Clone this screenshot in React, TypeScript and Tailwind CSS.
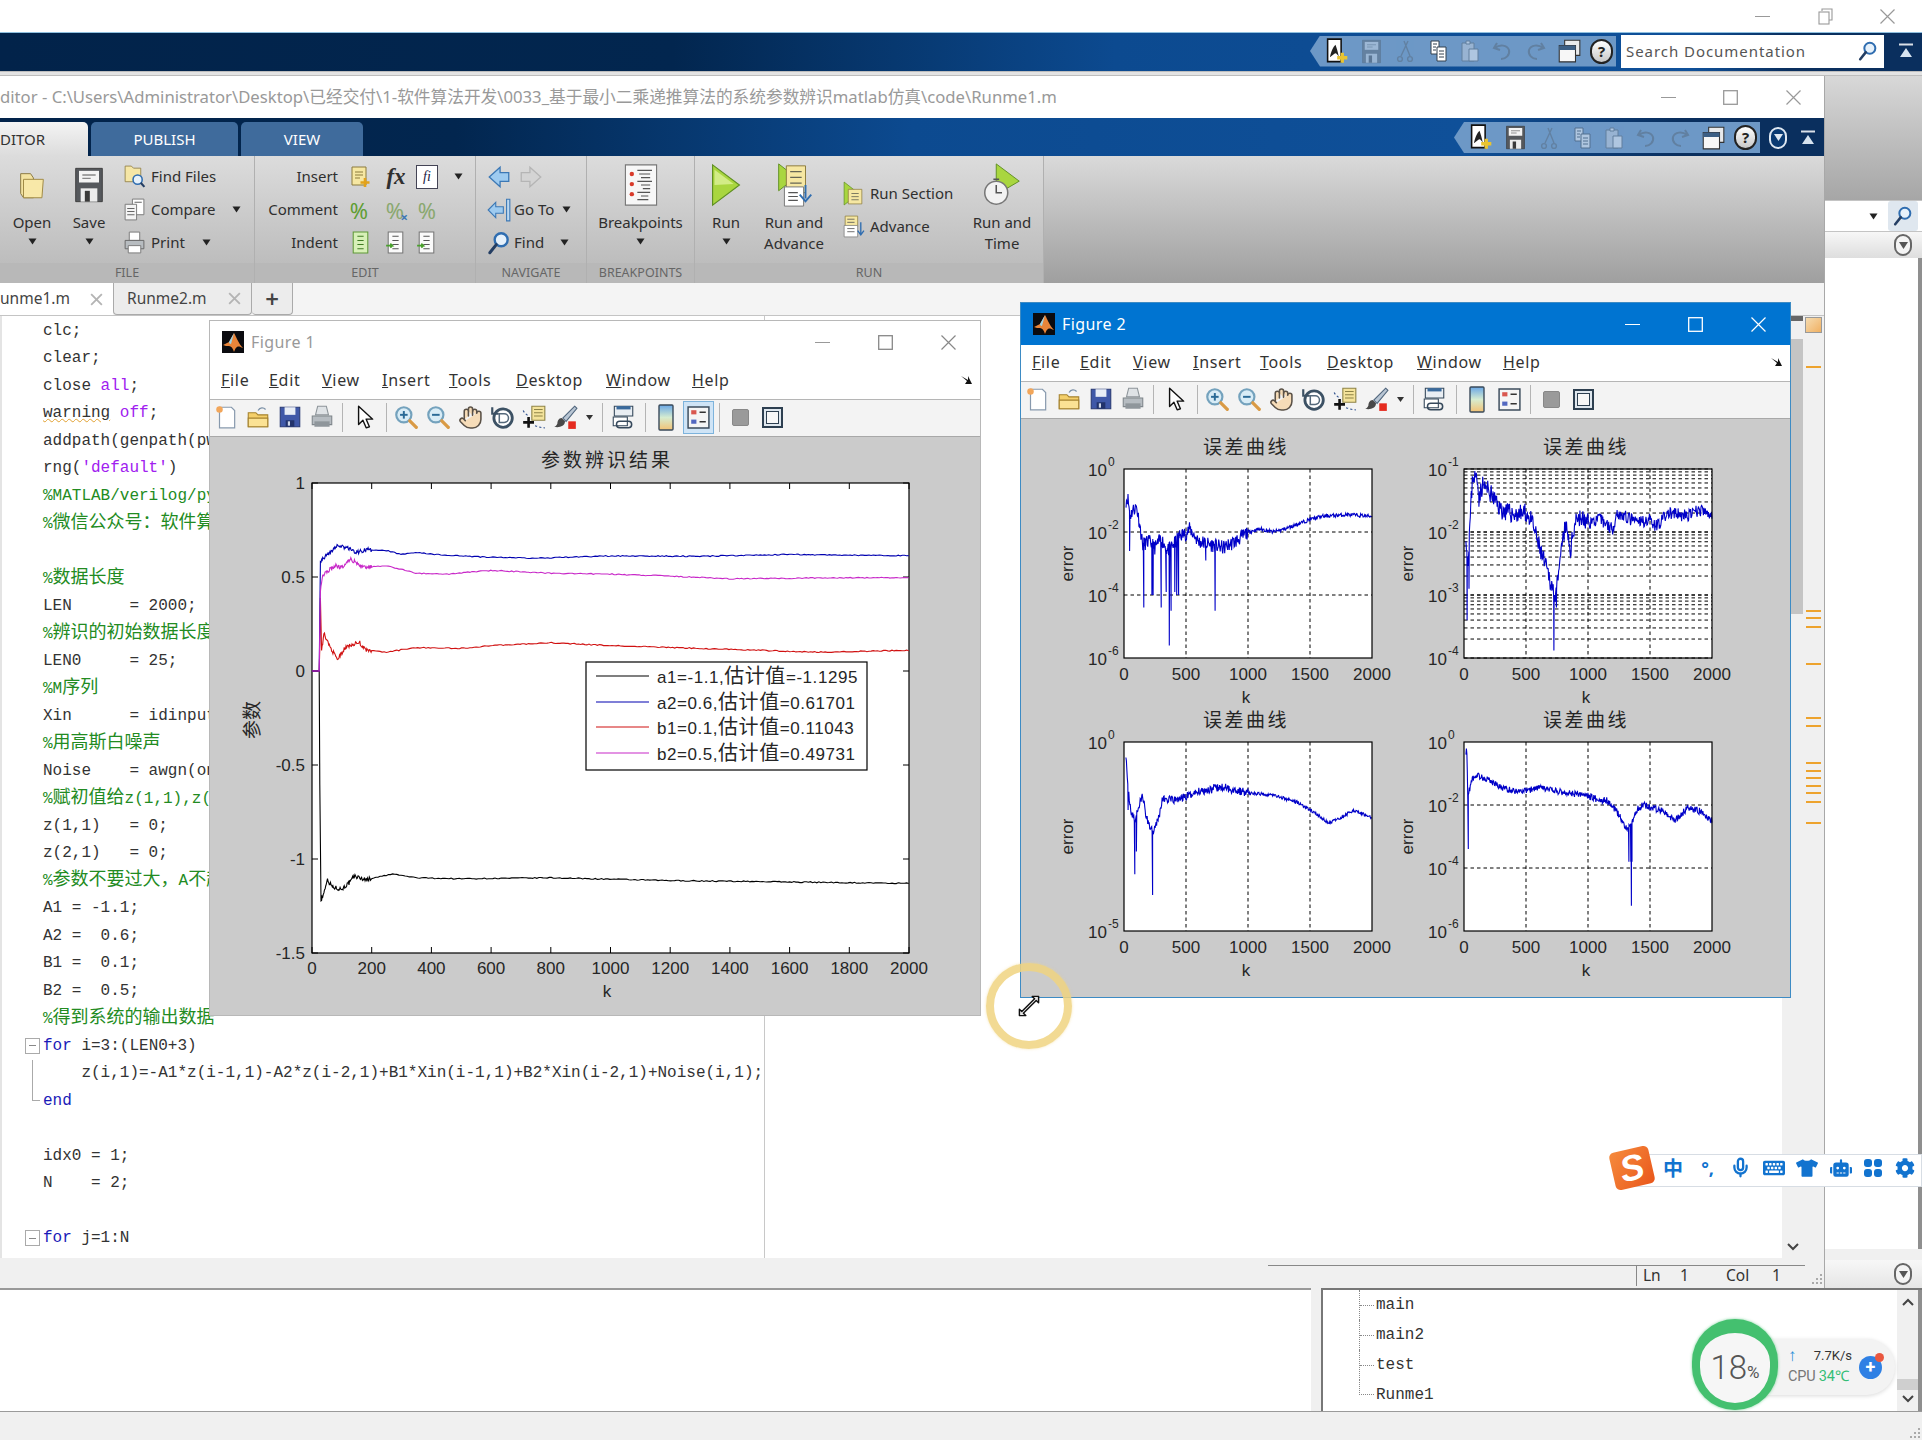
// App.tsx - MATLAB desktop with two figure windows
import type { ReactNode } from 'react';
import { Hand, Mic } from 'lucide-react';
import { FaCog, FaKeyboard, FaRobot, FaTshirt } from 'react-icons/fa';

const CJK = "'Noto Sans CJK SC', sans-serif";
const ARIAL = "'Liberation Sans', 'Noto Sans CJK SC', sans-serif";

const Svg = ({ s = 24, children }: { s?: number; children: ReactNode }) => (
  <svg width={s} height={s} viewBox="0 0 24 24" className="shrink-0">
    {children}
  </svg>
);

/* ---------- small drawn icons ---------- */
const Caret = () => (
  <svg width="9" height="7" viewBox="0 0 9 7" className="shrink-0">
    <path d="M0.5 0.5h8L4.5 6.5z" fill="#222" />
  </svg>
);
const Folder = ({ s = 34 }: { s?: number }) => (
  <Svg s={s}>
    <path d="M4 4h7l2 3v14H6L4 18z" fill="#f3e3a2" stroke="#8c7a45" strokeWidth="0.7" />
    <path d="M6 8h14l-1 13H6z" fill="#f8e8a8" stroke="#a08a45" strokeWidth="0.7" />
  </Svg>
);
const Floppy = ({ s = 40, dim = false }: { s?: number; dim?: boolean }) => (
  <Svg s={s}>
    <g opacity={dim ? 0.35 : 1}>
      <path d="M4 2h16v20H4z" fill="#55585c" stroke="#333" strokeWidth="0.5" />
      <path d="M6 3.5h12v7H6z" fill="#f3f3f3" />
      <path d="M8 6h8M8 8h5" stroke="#888" strokeWidth="0.8" />
      <path d="M7 14h10v8H7z" fill="#ececec" />
      <path d="M9.5 15.5h3v6.5h-3z" fill="#3a3a3a" />
    </g>
  </Svg>
);
const Magnifier = ({ s = 22, color = '#2f6db0' }: { s?: number; color?: string }) => (
  <Svg s={s}>
    <circle cx="14" cy="9" r="6" fill="#e6f1fb" stroke={color} strokeWidth="2.2" />
    <path d="M9.5 13.5 3.5 21" stroke="#243e63" strokeWidth="2.8" strokeLinecap="round" />
  </Svg>
);
const FindFilesIcon = () => (
  <Svg s={25}>
    <path d="M3 2h6l2 2h7v13H3z" fill="#f5e6a6" stroke="#8f7d45" strokeWidth="0.8" />
    <circle cx="15" cy="15" r="4.4" fill="#e6f1fb" stroke="#2f6db0" strokeWidth="1.5" />
    <path d="m18 18 3.5 4" stroke="#243e63" strokeWidth="2" />
  </Svg>
);
const CompareIcon = () => (
  <Svg s={25}>
    <path d="M10 2h11v15H10z" fill="#fff" stroke="#777" strokeWidth="0.9" />
    <path d="M3 7h11v15H3z" fill="#f4f4f4" stroke="#777" strokeWidth="0.9" />
    <path d="M5 11h7M5 14h7M5 17h7M12 5h7" stroke="#666" strokeWidth="1" />
  </Svg>
);
const PrintIcon = () => (
  <Svg s={25}>
    <path d="M7 2h10v8H7z" fill="#fff" stroke="#777" strokeWidth="0.9" />
    <path d="M3 10h18v8H3z" fill="#b7bcc0" stroke="#666" strokeWidth="0.9" />
    <path d="M6 15h12v7H6z" fill="#fff" stroke="#777" strokeWidth="0.9" />
  </Svg>
);
const InsertIcon = () => (
  <Svg s={24}>
    <path d="M4 2h14v18H4z" fill="#f6e7a2" stroke="#8b7a3c" strokeWidth="1" />
    <path d="M7 7h8M7 10h8M7 13h5" stroke="#8b7a3c" strokeWidth="1" />
    <path d="M17 13v9M12.500 17.500h9" stroke="#e2a21b" strokeWidth="2.6" />
  </Svg>
);
const BoxFn = () => (
  <span className="flex h-[24px] w-[22px] items-center justify-center border border-[#445] bg-white font-['Liberation_Serif'] text-[14px] italic text-[#224]">
    fi
  </span>
);
const Pct = ({ tone, extra }: { tone: string; extra?: string }) => (
  <span className={`relative flex h-[24px] w-[22px] items-center justify-center text-[22px] leading-none ${tone}`}>
    %
    {extra && <span className={`absolute -bottom-[2px] -right-[2px] text-[13px] font-bold leading-none ${extra}`}>×</span>}
  </span>
);
const GreenDoc = ({ arrow }: { arrow?: boolean }) => (
  <Svg s={25}>
    <path d="M5 2h14v20H5z" fill={arrow ? '#fafafa' : '#d8f0b8'} stroke={arrow ? '#777' : '#5f9a36'} strokeWidth="1" />
    <path d="M9 6h6M9 10h6M9 14h6M9 18h6" stroke={arrow ? '#555' : '#3e7a22'} strokeWidth="1" />
    {arrow && <path d="M3 15h6l-2-2m2 2-2 2" stroke="#49a02c" strokeWidth="1.6" fill="none" />}
  </Svg>
);
const NavArrow = ({ dir, dim }: { dir: 'l' | 'r'; dim?: boolean }) => (
  <Svg s={26}>
    <path
      d={dir === 'l' ? 'M3 12 13 3v5h8v8h-8v5z' : 'M21 12 11 3v5H3v8h8v5z'}
      fill={dim ? '#d4d4d4' : '#9ecbf0'}
      stroke={dim ? '#b5b5b5' : '#3c78b5'}
      strokeWidth="1.2"
    />
  </Svg>
);
const GoToIcon = () => (
  <Svg s={26}>
    <path d="M2 12 9 5v4h7v6H9v4z" fill="#9ecbf0" stroke="#3c78b5" />
    <path d="M19 2h3v20h-3z" fill="#bcd8f0" stroke="#3c78b5" />
  </Svg>
);
const BreakpointsIcon = () => (
  <Svg s={44}>
    <path d="M3.500 1h17v22h-17z" fill="#f7f7f7" stroke="#777" strokeWidth="0.6" />
    <circle cx="7" cy="6" r="1.2" fill="#d83a2a" />
    <circle cx="7" cy="11.500" r="1.2" fill="#d83a2a" />
    <circle cx="7" cy="17" r="1.2" fill="#d83a2a" />
    <path d="M10 4h8M11 6h6M12 8h5M10 10h8M12 12h5M13 14h4M10 16h7M12 18h4M10 20h6" stroke="#555" strokeWidth="0.6" />
  </Svg>
);
const RunIcon = () => (
  <Svg s={46}>
    <path d="M5 1.500 19 12 5 22.500z" fill="#a9d63f" stroke="#5f8f22" strokeWidth="0.6" />
    <path d="M6 4v8l10-.5z" fill="#d2ec86" />
  </Svg>
);
const RunAdvanceIcon = () => (
  <Svg s={46}>
    <path d="M4 1 13 8 4 15z" fill="#a9d63f" stroke="#5f8f22" strokeWidth="0.5" />
    <path d="M8 2h10v14H8z" fill="#f6e7a2" stroke="#8b7a3c" strokeWidth="0.5" />
    <path d="M10 5h6M10 8h6M10 11h6" stroke="#665" strokeWidth="0.6" />
    <path d="M7 13h10v10H7z" fill="#fff" stroke="#777" strokeWidth="0.5" />
    <path d="M9 16h5M9 18h5M9 20h5" stroke="#555" strokeWidth="0.6" />
    <path d="M18 12v7m-3-2 3 3.500 3-3.500" stroke="#2f6db0" strokeWidth="1" fill="none" />
  </Svg>
);
const RunSectionIcon = () => (
  <Svg s={25}>
    <path d="M3 1 17 12 3 23z" fill="#a9d63f" stroke="#5f8f22" strokeWidth="0.7" />
    <path d="M7 8h13v14H7z" fill="#f6e7a2" stroke="#8b7a3c" strokeWidth="0.7" />
    <path d="M10 12h7M10 15h7M10 18h7" stroke="#665" strokeWidth="0.8" />
  </Svg>
);
const AdvanceIcon = () => (
  <Svg s={25}>
    <path d="M4 2h12v10H4z" fill="#f6e7a2" stroke="#8b7a3c" strokeWidth="0.7" />
    <path d="M3 11h13v11H3z" fill="#fff" stroke="#777" strokeWidth="0.7" />
    <path d="M6 5h7M6 8h7M6 14h7M6 17h7" stroke="#555" strokeWidth="0.8" />
    <path d="M19 8v11m-3-3 3 4 3-4" stroke="#2f6db0" strokeWidth="1.3" fill="none" />
  </Svg>
);
const RunTimeIcon = () => (
  <Svg s={46}>
    <path d="M9 1 21 10 9 17z" fill="#a9d63f" stroke="#5f8f22" strokeWidth="0.5" />
    <circle cx="9" cy="16" r="6" fill="#f2f2f2" stroke="#777" strokeWidth="0.8" />
    <path d="M9 12v4h3M7.500 9h3" stroke="#555" strokeWidth="0.8" fill="none" />
  </Svg>
);

/* quick access icons */
const QaNew = () => (
  <Svg s={27}>
    <path d="M5 1h12v20H5z" fill="#fff" stroke="#111" strokeWidth="1.4" />
    <path d="M7 17c2-8 4-10 5-11 1 3 2 6 3 11-2-4-3-4-4-3z" fill="#222" />
    <path d="M18 13v9M13.500 17.500h9" stroke="#e9c430" strokeWidth="3" />
  </Svg>
);
const QaCut = () => (
  <Svg s={24}>
    <g opacity="0.4" stroke="#52606d" fill="none" strokeWidth="1.4">
      <path d="M15 2 8 17M11 2l6 15" />
      <circle cx="7" cy="20" r="2.4" />
      <circle cx="17" cy="20" r="2.4" />
    </g>
  </Svg>
);
const QaCopy = ({ dim }: { dim?: boolean }) => (
  <Svg s={24}>
    <g opacity={dim ? 0.45 : 1}>
      <path d="M5 2h8v13H5z" fill="#fff" stroke="#33414f" />
      <path d="M11 8h9v14h-9z" fill="#fff" stroke="#33414f" />
      <path d="M7 5h4M7 8h3M7 11h3M13 12h5M13 15h5M13 18h5" stroke="#33414f" />
    </g>
  </Svg>
);
const QaPaste = () => (
  <Svg s={24}>
    <g opacity="0.45">
      <path d="M4 4h12v18H4z" fill="#cdd6df" stroke="#52606d" />
      <path d="M8 2h4v3H8z" fill="#fff" stroke="#52606d" />
      <path d="M11 10h9v12h-9z" fill="#fff" stroke="#52606d" />
    </g>
  </Svg>
);
const QaUndo = ({ flip }: { flip?: boolean }) => (
  <Svg s={24}>
    <g opacity="0.42" transform={flip ? 'matrix(-1 0 0 1 24 0)' : undefined}>
      <path d="M6 4 3 9l6 2M4 9c5-4 12-3 14 2 1 5-3 9-8 9" fill="none" stroke="#52606d" strokeWidth="2" />
    </g>
  </Svg>
);
const QaWindows = () => (
  <Svg s={26}>
    <path d="M8 2h14v14H8z" fill="#e8eaec" stroke="#333" strokeWidth="1" />
    <path d="M3 7h15v15H3z" fill="#f7f7f7" stroke="#333" strokeWidth="1" />
    <path d="M3 7h15v4H3z" fill="#3c5f85" />
  </Svg>
);
const QaHelp = () => (
  <span className="flex h-[25px] w-[23px] items-center justify-center rounded-full border-2 border-[#222] bg-gradient-to-b from-white to-[#c8c8c8] text-[15px] font-bold leading-none text-[#222]">
    ?
  </span>
);
const Collapse = () => (
  <svg width="16" height="16" viewBox="0 0 16 16">
    <path d="M1 1.500h14" stroke="#fff" strokeWidth="2" opacity="0.85" />
    <path d="M8 5 14 14H2z" fill="#d7e3ef" />
  </svg>
);
const CircleDown = ({ light }: { light?: boolean }) => (
  <span
    className={`flex h-[22px] w-[18px] items-center justify-center rounded-full border-2 ${
      light ? 'border-[#dfe8f2] bg-[#0a3a72]' : 'border-[#666] bg-[#f4f4f4]'
    }`}
  >
    <svg width="9" height="7" viewBox="0 0 9 7">
      <path d="M0 0h9L4.500 7z" fill={light ? '#dfe8f2' : '#555'} />
    </svg>
  </span>
);
const WinX = ({ color, s = 17, w = 1.2 }: { color: string; s?: number; w?: number }) => (
  <svg width={s} height={s} viewBox="0 0 17 17">
    <path d="m1.500 1.500 14 14m0-14-14 14" stroke={color} strokeWidth={w} />
  </svg>
);
const WinMax = ({ color }: { color: string }) => (
  <svg width="15" height="15" viewBox="0 0 15 15">
    <rect x="0.7" y="0.7" width="13.6" height="13.6" fill="none" stroke={color} strokeWidth="1.3" />
  </svg>
);
const WinRestore = ({ color }: { color: string }) => (
  <svg width="15" height="17" viewBox="0 0 15 17">
    <path d="M4 3V1h10v11h-3" fill="none" stroke={color} strokeWidth="1.1" />
    <rect x="1" y="4" width="10" height="12" fill="none" stroke={color} strokeWidth="1.1" />
  </svg>
);
const WinMin = ({ color }: { color: string }) => <span className={`block h-px w-[15px] ${color}`} />;

const MatlabLogo = () => (
  <svg width="22" height="22" viewBox="0 0 22 22" className="shrink-0">
    <rect width="22" height="22" fill="#0b0b0f" />
    <path d="M1 14 7 11l5-9c2 3 4 10 9 15-3-1-4-2-6-1-2 1-2 3-3 5-1-4-3-6-5-6-2 0-4 0-6-1z" fill="#e9853a" />
    <path d="M7 11 12 2c-1 4-2 7-3 11-1 0-2-1-2-2z" fill="#9fd4e6" />
  </svg>
);

/* figure toolbar icons */
const TbNew = () => (
  <Svg s={26}>
    <path d="M6 3h11l3 3v16H6z" fill="#fff" stroke="#8799ad" strokeWidth="1.1" />
    <circle cx="6" cy="5" r="3" fill="#f2a65a" />
  </Svg>
);
const TbOpen = () => (
  <Svg s={26}>
    <path d="M3 8h7l2 2h9v11H3z" fill="#f4cf6a" stroke="#a5822f" />
    <path d="M3 13h18v8H3z" fill="#fbe294" stroke="#a5822f" />
    <path d="M12 6c2-3 5-3 7-1" fill="none" stroke="#7d92a8" strokeWidth="1.2" />
  </Svg>
);
const TbSave = () => (
  <Svg s={26}>
    <path d="M3 3h18v18H3z" fill="#3f58a8" stroke="#2a3b75" />
    <path d="M7 3h10v7H7z" fill="#e8edf6" />
    <path d="M8 15h8v6H8z" fill="#22336b" />
    <path d="M10 16h2v4h-2z" fill="#cfd8ea" />
  </Svg>
);
const TbPrint = () => (
  <Svg s={26}>
    <path d="M8 2h8l2 8H6z" fill="#dfe3e6" stroke="#8d9499" />
    <path d="M3 11h18v8H3z" fill="#b6bcc1" stroke="#80878c" />
    <path d="M5 16h14v5H5z" fill="#8f969b" />
  </Svg>
);
const TbPointer = () => (
  <Svg s={26}>
    <path d="M7 2v17l4-4 3 7 3-1-3-7h6z" fill="#fff" stroke="#111" strokeWidth="1.3" strokeLinejoin="round" />
  </Svg>
);
const TbZoom = ({ plus }: { plus?: boolean }) => (
  <Svg s={26}>
    <circle cx="10" cy="10" r="7" fill="#d8ecf6" stroke="#74a2bd" strokeWidth="2" />
    <path d="M6.500 10h7" stroke="#2a6a96" strokeWidth="1.8" />
    {plus && <path d="M10 6.500v7" stroke="#2a6a96" strokeWidth="1.8" />}
    <path d="m15.500 15.500 6 6" stroke="#d99a45" strokeWidth="3" strokeLinecap="round" />
  </Svg>
);
const TbHand = () => <Hand size={25} fill="#f6dcb8" color="#5a5147" strokeWidth={1.5} />;
const TbRotate = () => (
  <Svg s={26}>
    <circle cx="13" cy="13" r="8.500" fill="#fff" stroke="#3c5164" strokeWidth="2.6" />
    <path d="M3 3v6h6" fill="none" stroke="#3c5164" strokeWidth="2" />
    <path d="M9.500 9h4.500a4 4 0 0 1 0 8H9.500z" fill="none" stroke="#55697b" strokeWidth="1.4" />
  </Svg>
);
const TbData = () => (
  <Svg s={26}>
    <path d="M10 2h12v13H10z" fill="#f4e39b" stroke="#8d8347" />
    <path d="M12 5h8M12 8h8M12 11h8" stroke="#8d8347" />
    <path d="M7 12v10M2 17h10" stroke="#111" strokeWidth="2.4" />
    <path d="M2 6c1 2 3 4 5 5M13 20c3 1 6 2 9 2" stroke="#2d4f8e" strokeDasharray="2 2" fill="none" />
  </Svg>
);
const TbBrush = () => (
  <Svg s={26}>
    <path d="M21 2 10 13l3 3L23 4z" fill="#b9c6d4" stroke="#51667d" />
    <path d="M9 13c-3 0-4 3-4 5-1 2-2 3-3 3 4 1 10 0 10-5z" fill="#494949" />
    <path d="M15 16h7v7h-7z" fill="#e52b1f" />
  </Svg>
);
const TbLink = () => (
  <Svg s={26}>
    <path d="M4 2h17v9H4z" fill="#e9eef3" stroke="#35485b" />
    <path d="M6 2v3h13V2" fill="#3a6a9c" />
    <path d="M3 12h13v8H3z" fill="#fff" stroke="#35485b" />
    <path d="M9 16h8a3 3 0 0 1 0 6H9a3 3 0 0 1 0-6z" fill="none" stroke="#35485b" strokeWidth="1.4" />
  </Svg>
);
const TbColorbar = () => (
  <svg width="16" height="27" viewBox="0 0 16 27">
    <defs>
      <linearGradient id="cb" x1="0" y1="0" x2="0" y2="1">
        <stop offset="0" stopColor="#6aa7e6" />
        <stop offset="0.5" stopColor="#d6ecd0" />
        <stop offset="1" stopColor="#f3c274" />
      </linearGradient>
    </defs>
    <rect x="1" y="1" width="14" height="25" rx="1" fill="url(#cb)" stroke="#3a4a5a" strokeWidth="1.4" />
  </svg>
);
const TbLegend = () => (
  <Svg s={25}>
    <path d="M2 2h20v20H2z" fill="#f5f5f5" stroke="#3c4c5c" strokeWidth="1.4" />
    <path d="M5 5h5v4H5z" fill="#d9574f" />
    <path d="M5 14h5v4H5z" fill="#5368c0" />
    <path d="M13 7h6M13 16h6" stroke="#333" strokeWidth="1.4" />
  </Svg>
);
const TbGray = () => <span className="block h-[17px] w-[17px] rounded-[2px] border border-[#888] bg-[#9a9a9a]" />;
const TbRect = () => (
  <span className="flex h-[21px] w-[21px] items-center justify-center border-2 border-[#2d3f50] bg-[#dfe7ee]">
    <span className="block h-[13px] w-[13px] border border-[#2d3f50] bg-[#f7f7f7]" />
  </span>
);
const TbSep = ({ className }: { className: string }) => (
  <span className={`flex h-full items-center justify-center ${className}`}>
    <span className="block h-[29px] w-px bg-[#b4b4b4]" />
  </span>
);

/* ---------- ribbon ---------- */
const Big = ({
  className,
  icon,
  lines,
  caret = true,
}: {
  className: string;
  icon: ReactNode;
  lines: string[];
  caret?: boolean;
}) => (
  <div className={`flex flex-col items-center pt-[7px] ${className}`}>
    <div className="flex h-[44px] items-center justify-center">{icon}</div>
    <div className="mt-[5px] text-center leading-[21px]">
      {lines.map((l) => (
        <div key={l}>{l}</div>
      ))}
    </div>
    {caret && (
      <div className="mt-[5px]">
        <Caret />
      </div>
    )}
  </div>
);

const Section = ({ w, label, children }: { w: string; label: string; children: ReactNode }) => (
  <div className={`flex h-full flex-col border-r border-[#b0b0b0] ${w}`}>
    <div className="flex h-[107px] bg-gradient-to-b from-[#dcdcdc] to-[#bdbdbd]">{children}</div>
    <div className="flex h-[20px] items-center justify-center bg-[#b8b8b8] text-[12.500px] text-[#666]">{label}</div>
  </div>
);

const Row3 = ({ className, children }: { className?: string; children: ReactNode }) => (
  <div className={`flex h-[33px] items-center ${className ?? ''}`}>{children}</div>
);

const Ribbon = () => (
  <div className="flex h-[127px] bg-gradient-to-b from-[#dadada] to-[#9f9f9f] text-[15px] text-[#2f2f2f]">
    <Section w="w-[255px]" label="FILE">
      <Big className="w-[64px]" icon={<Folder />} lines={['Open']} />
      <Big className="w-[50px]" icon={<Floppy />} lines={['Save']} />
      <div className="flex flex-col pt-[4px]">
        <Row3 className="gap-[4px] pl-[8px]">
          <FindFilesIcon />
          <span>Find Files</span>
        </Row3>
        <Row3 className="gap-[4px] pl-[8px]">
          <CompareIcon />
          <span>Compare</span>
          <span className="ml-[12px]">
            <Caret />
          </span>
        </Row3>
        <Row3 className="gap-[4px] pl-[8px]">
          <PrintIcon />
          <span>Print</span>
          <span className="ml-[13px]">
            <Caret />
          </span>
        </Row3>
      </div>
    </Section>
    <Section w="w-[221px]" label="EDIT">
      <div className="flex flex-col pt-[4px]">
        <Row3>
          <span className="w-[83px] text-right">Insert</span>
          <span className="ml-[10px]">
            <InsertIcon />
          </span>
          <span className="ml-[12px] w-[24px] text-center font-['Liberation_Serif'] text-[23px] font-bold italic leading-none">fx</span>
          <span className="ml-[8px]">
            <BoxFn />
          </span>
          <span className="ml-[16px]">
            <Caret />
          </span>
        </Row3>
        <Row3>
          <span className="w-[83px] text-right">Comment</span>
          <span className="ml-[10px]">
            <Pct tone="text-[#5f9e33]" />
          </span>
          <span className="ml-[14px]">
            <Pct tone="text-[#8aa870]" extra="text-[#3c78b5]" />
          </span>
          <span className="ml-[10px]">
            <Pct tone="text-[#8aa870]" />
          </span>
        </Row3>
        <Row3>
          <span className="w-[83px] text-right">Indent</span>
          <span className="ml-[10px]">
            <GreenDoc />
          </span>
          <span className="ml-[10px]">
            <GreenDoc arrow />
          </span>
          <span className="ml-[6px]">
            <GreenDoc arrow />
          </span>
        </Row3>
      </div>
    </Section>
    <Section w="w-[111px]" label="NAVIGATE">
      <div className="flex flex-col pl-[10px] pt-[4px]">
        <Row3 className="gap-[6px]">
          <NavArrow dir="l" />
          <NavArrow dir="r" dim />
        </Row3>
        <Row3 className="gap-[2px]">
          <GoToIcon />
          <span>Go To</span>
          <span className="ml-[6px]">
            <Caret />
          </span>
        </Row3>
        <Row3 className="gap-[2px]">
          <Magnifier s={26} />
          <span>Find</span>
          <span className="ml-[14px]">
            <Caret />
          </span>
        </Row3>
      </div>
    </Section>
    <Section w="w-[108px]" label="BREAKPOINTS">
      <Big className="w-full" icon={<BreakpointsIcon />} lines={['Breakpoints']} />
    </Section>
    <Section w="w-[349px]" label="RUN">
      <Big className="w-[62px]" icon={<RunIcon />} lines={['Run']} />
      <Big className="w-[74px]" icon={<RunAdvanceIcon />} lines={['Run and', 'Advance']} caret={false} />
      <div className="flex w-[134px] flex-col pl-[10px] pt-[21px]">
        <Row3 className="gap-[4px]">
          <RunSectionIcon />
          <span>Run Section</span>
        </Row3>
        <Row3 className="gap-[4px]">
          <AdvanceIcon />
          <span>Advance</span>
        </Row3>
      </div>
      <Big className="w-[74px]" icon={<RunTimeIcon />} lines={['Run and', 'Time']} caret={false} />
    </Section>
  </div>
);

const QaBar = ({ live, save }: { live: boolean; save: boolean }) => (
  <div className="flex h-[31px] items-center bg-[#6d98c6] pl-[8px] [clip-path:polygon(10px_0,100%_0,100%_100%,10px_100%,0_50%)]">
    <div className="flex w-[298px] items-center justify-between pl-[4px] pr-[3px]">
      <QaNew />
      <Floppy s={27} dim={!save} />
      <QaCut />
      <QaCopy dim={!live} />
      <QaPaste />
      <QaUndo />
      <QaUndo flip />
      <QaWindows />
      <QaHelp />
    </div>
  </div>
);

/* ---------- code editor ---------- */
type Seg = string | [string, string];
type Line = { segs?: Seg[]; cmt?: string; fold?: 'box' | 'line' | 'end' };

const KW = 'text-[#1a1ab8]';
const STR = 'text-[#a020f0]';

const code: Line[] = [
  { segs: ['clc;'] },
  { segs: ['clear;'] },
  { segs: ['close ', ['all', STR], ';'] },
  { segs: [['warning', 'underline decoration-wavy decoration-[#e0a030] decoration-1'], ' ', ['off', STR], ';'] },
  { segs: ['addpath(genpath(pwd));'] },
  { segs: ['rng(', ["'default'", STR], ')'] },
  { cmt: '%MATLAB/verilog/python/opencv' },
  { cmt: '%微信公众号：软件算法开发实验室' },
  {},
  { cmt: '%数据长度' },
  { segs: ['LEN      = 2000;'] },
  { cmt: '%辨识的初始数据长度' },
  { segs: ['LEN0     = 25;'] },
  { cmt: '%M序列' },
  { segs: ['Xin      = idinput(LEN);'] },
  { cmt: '%用高斯白噪声' },
  { segs: ['Noise    = awgn(ones(LEN,1),20);'] },
  { cmt: '%赋初值给z(1,1),z(2,1)' },
  { segs: ['z(1,1)   = 0;'] },
  { segs: ['z(2,1)   = 0;'] },
  { cmt: '%参数不要过大，A不超过1' },
  { segs: ['A1 = -1.1;'] },
  { segs: ['A2 =  0.6;'] },
  { segs: ['B1 =  0.1;'] },
  { segs: ['B2 =  0.5;'] },
  { cmt: '%得到系统的输出数据' },
  { segs: [['for', KW], ' i=3:(LEN0+3)'], fold: 'box' },
  { segs: ['    z(i,1)=-A1*z(i-1,1)-A2*z(i-2,1)+B1*Xin(i-1,1)+B2*Xin(i-2,1)+Noise(i,1);'], fold: 'line' },
  { segs: [['end', KW]], fold: 'end' },
  {},
  { segs: ['idx0 = 1;'] },
  { segs: ['N    = 2;'] },
  {},
  { segs: [['for', KW], ' j=1:N'], fold: 'box' },
  { segs: ['    for k = 1:LEN'], fold: 'box' },
];

const Comment = ({ text }: { text: string }) => (
  <span className="text-[#228b22]">
    {text.split(/([\u3000-\u9fff\uff00-\uffef]+)/).map((p, i) =>
      i % 2 ? (
        <span key={i} className="[font-family:'Noto_Sans_CJK_SC',sans-serif] text-[18px] leading-none">
          {p}
        </span>
      ) : (
        p
      ),
    )}
  </span>
);

const FoldMark = ({ kind }: { kind?: Line['fold'] }) => {
  if (kind === 'box')
    return (
      <span className="ml-[23px] flex h-[16px] w-[15px] items-center justify-center border border-[#aaa] bg-white">
        <span className="block h-px w-[7px] bg-[#888]" />
      </span>
    );
  if (kind === 'line') return <span className="ml-[30px] block h-full w-px bg-[#aaa]" />;
  if (kind === 'end')
    return <span className="mb-[13px] ml-[30px] block h-[14px] w-[8px] border-b border-l border-[#aaa]" />;
  return null;
};

const CodePane = () => (
  <div className="relative flex-1 overflow-hidden border-l-2 border-[#e4e4e4] bg-white pt-px font-['Liberation_Mono'] text-[16px] text-[#333]">
    <span className="absolute bottom-0 left-[762px] top-0 w-px bg-[#c8c8c8]" />
    {code.map((l, i) => (
      <div key={i} className="flex h-[27.500px] items-center whitespace-pre">
        <div className="flex h-full w-[41px] shrink-0 items-center">
          <FoldMark kind={l.fold} />
        </div>
        {l.cmt ? (
          <Comment text={l.cmt} />
        ) : (
          <span>
            {(l.segs ?? []).map((s, j) =>
              typeof s === 'string' ? (
                s
              ) : (
                <span key={j} className={s[1]}>
                  {s[0]}
                </span>
              ),
            )}
          </span>
        )}
      </div>
    ))}
  </div>
);

const Chevron = ({ up }: { up?: boolean }) => (
  <svg width="12" height="8" viewBox="0 0 12 8">
    <path d={up ? 'M1 7l5-5 5 5' : 'M1 1l5 5 5-5'} fill="none" stroke="#444" strokeWidth="2" />
  </svg>
);

const markYs = ['mt-[33px]', 'mt-[242px]', 'mt-[5px]', 'mt-[7px]', 'mt-[35px]', 'mt-[52px]', 'mt-[6px]', 'mt-[35px]', 'mt-[6px]', 'mt-[5px]', 'mt-[6px]', 'mt-[5px]', 'mt-[7px]', 'mt-[19px]'];

const Markers = () => (
  <div className="flex w-[21px] flex-col items-center bg-[#f0f0f0] pt-px">
    <span className="block h-[16px] w-[17px] border border-[#999] bg-gradient-to-br from-[#f5dcb0] to-[#f0b060]" />
    {markYs.map((m, i) => (
      <span key={i} className={`block h-[2px] w-[15px] shrink-0 bg-[#eda32e] ${m}`} />
    ))}
  </div>
);

const Grip = () => (
  <svg width="14" height="14" viewBox="0 0 14 14">
    <g fill="#aaa">
      <rect x="10" y="2" width="2" height="2" />
      <rect x="6" y="6" width="2" height="2" />
      <rect x="10" y="6" width="2" height="2" />
      <rect x="2" y="10" width="2" height="2" />
      <rect x="6" y="10" width="2" height="2" />
      <rect x="10" y="10" width="2" height="2" />
    </g>
  </svg>
);

/* ---------- plot data ---------- */
const rand = (seed: number) => {
  let s = seed;
  return () => {
    s = (s * 16807) % 2147483647;
    return s / 2147483647 - 0.5;
  };
};
const interp = (pts: number[][], k: number) => {
  for (let i = 1; i < pts.length; i++) {
    if (k <= pts[i][0]) {
      const [k0, v0] = pts[i - 1];
      const [k1, v1] = pts[i];
      return v0 + ((v1 - v0) * (k - k0)) / (k1 - k0);
    }
  }
  return pts[pts.length - 1][1];
};

type Series = { color: string; pts: number[][] };
const fig1Series: Series[] = [
  {
    color: '#000000',
    pts: [[0, 0], [25, 0], [26, -0.6], [30, -1.22], [40, -1.18], [50, -1.11], [70, -1.15], [100, -1.16], [130, -1.12], [140, -1.09], [180, -1.11], [270, -1.08], [350, -1.1], [500, -1.105], [800, -1.1], [1200, -1.115], [1500, -1.12], [2000, -1.13]],
  },
  {
    color: '#d01010',
    pts: [[0, 0], [25, 0], [28, 0.38], [32, 0.1], [40, 0.2], [60, 0.13], [85, 0.06], [110, 0.12], [130, 0.14], [160, 0.15], [180, 0.11], [250, 0.1], [350, 0.125], [500, 0.12], [600, 0.135], [800, 0.15], [1000, 0.135], [1300, 0.12], [1700, 0.1], [2000, 0.11]],
  },
  {
    color: '#0000b0',
    pts: [[0, 0], [25, 0], [27, 0.58], [40, 0.6], [60, 0.63], [80, 0.665], [120, 0.655], [150, 0.63], [180, 0.645], [250, 0.64], [300, 0.62], [350, 0.63], [450, 0.615], [600, 0.605], [750, 0.6], [1000, 0.612], [1300, 0.61], [1600, 0.62], [2000, 0.613]],
  },
  {
    color: '#c828c8',
    pts: [[0, 0], [25, 0], [27, 0.42], [35, 0.5], [50, 0.53], [80, 0.56], [100, 0.55], [130, 0.595], [170, 0.55], [250, 0.56], [300, 0.54], [350, 0.52], [450, 0.515], [600, 0.535], [800, 0.52], [1000, 0.515], [1200, 0.505], [1400, 0.49], [1700, 0.495], [2000, 0.497]],
  },
];

const Fig1Plot = () => {
  const X0 = 311;
  const X1 = 908;
  const Y0 = 483;
  const Y1 = 953;
  const px = (k: number) => X0 + ((X1 - X0) * k) / 2000;
  const py = (v: number) => Y0 + ((1 - v) * (Y1 - Y0)) / 2.5;
  const ks = [0, 200, 400, 600, 800, 1000, 1200, 1400, 1600, 1800, 2000];
  const vs = [1, 0.5, 0, -0.5, -1, -1.5];
  const legend = [
    ['a1=-1.1,', '=-1.1295', '#000', 677],
    ['a2=0.6,', '=0.61701', '#0000b0', 703],
    ['b1=0.1,', '=0.11043', '#d01010', 728],
    ['b2=0.5,', '=0.49731', '#c828c8', 754],
  ] as const;
  return (
    <svg viewBox="209 437 770 578" className="block h-full w-full" fontFamily={ARIAL} fill="#262626">
      <text x="606" y="467" fontSize="19" textAnchor="middle" letterSpacing="3" fontFamily={CJK}>
        参数辨识结果
      </text>
      <rect x={X0} y={Y0} width={X1 - X0} height={Y1 - Y0} fill="#fff" stroke="#000" strokeWidth="1.2" />
      {ks.map((k) => (
        <g key={k}>
          <path d={`M${px(k)} ${Y1}v-6M${px(k)} ${Y0}v6`} stroke="#000" />
          <text x={px(k)} y="974" fontSize="17" textAnchor="middle">
            {k}
          </text>
        </g>
      ))}
      {vs.map((v) => (
        <g key={v}>
          <path d={`M${X0} ${py(v)}h6M${X1} ${py(v)}h-6`} stroke="#000" />
          <text x="304" y={py(v)} dy="6" fontSize="17" textAnchor="end">
            {v}
          </text>
        </g>
      ))}
      {fig1Series.map((s, i) => {
        const r = rand(97 + i * 31);
        const out: string[] = [];
        for (let k = 0; k <= 2000; k += k < 200 ? 2 : 7) {
          const amp = k < 26 ? 0 : k < 200 ? 0.022 : 0.0055;
          out.push(`${px(k).toFixed(1)},${py(interp(s.pts, k) + r() * amp).toFixed(1)}`);
        }
        return <polyline key={s.color} points={out.join(' ')} fill="none" stroke={s.color} strokeWidth="1.1" />;
      })}
      <rect x="585" y="662" width="281" height="108" fill="#fff" stroke="#000" strokeWidth="1.2" />
      {legend.map(([a, b, c, y]) => (
        <g key={a}>
          <path d={`M595 ${y - 1}h53`} stroke={c} strokeWidth="1.1" />
          <text x="656" y={y} dy="6" fontSize="17" letterSpacing="0.55">
            {a}
            <tspan fontSize="20" fontFamily={CJK}>
              估计值
            </tspan>
            {b}
          </text>
        </g>
      ))}
      <text x="606" y="997" fontSize="17" textAnchor="middle">
        k
      </text>
      <text transform="translate(258 720) rotate(-90)" fontSize="19" textAnchor="middle" fontFamily={CJK}>
        参数
      </text>
    </svg>
  );
};

type LogPlot = {
  x: number;
  y: number;
  top: number;
  bottom: number;
  labels: number[];
  hgrid: number[];
  pts: number[][];
  spikes: number[][];
  amp: [number, number];
  seed: number;
};

const minor = (() => {
  const out: number[] = [];
  for (const d of [-2, -3, -4]) for (let m = 1; m <= 10; m++) out.push(d + Math.log10(m));
  return out;
})();

const logPlots: LogPlot[] = [
  {
    x: 1124, y: 469, top: 0, bottom: -6, labels: [0, -2, -4, -6], hgrid: [-2, -4], seed: 11, amp: [0.45, 0.12],
    pts: [[16, -1], [30, -0.9], [50, -1.5], [70, -1.3], [100, -1.2], [120, -1.6], [150, -2.4], [200, -2.3], [250, -2.5], [300, -2.2], [350, -2.6], [400, -2.4], [450, -2.1], [500, -2.05], [530, -1.9], [600, -2.3], [700, -2.4], [800, -2.5], [900, -2.3], [1000, -2], [1100, -1.9], [1200, -2], [1300, -1.9], [1400, -1.75], [1500, -1.6], [1600, -1.5], [1800, -1.45], [2000, -1.5]],
    spikes: [[45, -2.6], [160, -4.4], [225, -4], [235, -4], [300, -4.4], [340, -3.9], [365, -5.6], [380, -4.5], [410, -3.9], [425, -4], [440, -4], [660, -2.9], [735, -4.5]],
  },
  {
    x: 1464, y: 469, top: -1, bottom: -4, labels: [-1, -2, -3, -4], hgrid: minor, seed: 23, amp: [0.3, 0.2],
    pts: [[15, -2], [30, -2.5], [70, -1.1], [100, -1.15], [130, -1.4], [150, -1.25], [200, -1.35], [250, -1.5], [300, -1.65], [400, -1.72], [500, -1.7], [550, -1.85], [600, -2.2], [650, -2.5], [700, -2.8], [730, -3], [760, -2.8], [790, -2.2], [820, -1.9], [860, -2.3], [900, -1.75], [1000, -1.85], [1100, -1.8], [1200, -1.95], [1230, -1.7], [1400, -1.85], [1500, -1.8], [1550, -1.9], [1650, -1.7], [1800, -1.75], [1900, -1.65], [2000, -1.75]],
    spikes: [[25, -3.4], [40, -2.9], [120, -1.6], [725, -3.88], [745, -3.2]],
  },
  {
    x: 1124, y: 742, top: 0, bottom: -5, labels: [0, -5], hgrid: [], seed: 37, amp: [0.22, 0.08],
    pts: [[15, -0.3], [25, -1], [40, -1.4], [60, -1.9], [90, -2.1], [100, -1.9], [130, -1.6], [150, -1.4], [180, -2], [220, -2.3], [240, -2.3], [280, -2], [310, -1.5], [400, -1.55], [500, -1.45], [600, -1.3], [800, -1.2], [1000, -1.35], [1200, -1.4], [1400, -1.6], [1550, -1.9], [1650, -2.15], [1750, -2], [1850, -1.8], [2000, -2]],
    spikes: [[33, -1.8], [87, -3.5], [100, -2.9], [231, -4.05]],
  },
  {
    x: 1464, y: 742, top: 0, bottom: -6, labels: [0, -2, -4, -6], hgrid: [-2, -4], seed: 53, amp: [0.2, 0.22],
    pts: [[15, -0.3], [25, -0.3], [30, -1.8], [60, -1.2], [100, -1.05], [200, -1.2], [300, -1.45], [400, -1.55], [500, -1.55], [600, -1.45], [800, -1.6], [1000, -1.7], [1100, -1.85], [1150, -1.85], [1250, -2.3], [1300, -2.7], [1340, -2.7], [1370, -2.4], [1400, -2.1], [1450, -2], [1600, -2.2], [1700, -2.5], [1800, -2.1], [1900, -2.2], [2000, -2.5]],
    spikes: [[35, -3.4], [1330, -3.8], [1345, -3.8], [1350, -5.2], [1355, -3.8]],
  },
];

const LogAxes = ({ p }: { p: LogPlot }) => {
  const W = 248;
  const H = 189;
  const px = (k: number) => p.x + (W * k) / 2000;
  const py = (v: number) => p.y + (H * (p.top - v)) / (p.top - p.bottom);
  const r = rand(p.seed);
  const path: string[] = [];
  let si = 0;
  for (let k = p.pts[0][0]; k <= 2000; k += 4) {
    while (si < p.spikes.length && p.spikes[si][0] <= k) {
      path.push(`${px(p.spikes[si][0]).toFixed(1)},${py(p.spikes[si][1]).toFixed(1)}`);
      si++;
    }
    const amp = k < 1000 ? p.amp[0] : p.amp[1];
    const v = Math.max(p.bottom, Math.min(p.top, interp(p.pts, k) + r() * amp));
    path.push(`${px(k).toFixed(1)},${py(v).toFixed(1)}`);
  }
  const cx = p.x + W / 2;
  return (
    <g>
      <text x={cx - 2} y={p.y - 15} fontSize="19" textAnchor="middle" letterSpacing="2.5" fontFamily={CJK}>
        误差曲线
      </text>
      <rect x={p.x} y={p.y} width={W} height={H} fill="#fff" />
      {p.hgrid.map((v) => (
        <path key={v} d={`M${p.x} ${py(v)}h${W}`} stroke="#000" strokeDasharray="3.500 3" />
      ))}
      {[500, 1000, 1500].map((k) => (
        <path key={k} d={`M${px(k)} ${p.y}v${H}`} stroke="#000" strokeDasharray="3.500 3" />
      ))}
      <polyline points={path.join(' ')} fill="none" stroke="#0000c8" strokeWidth="1.1" />
      <rect x={p.x} y={p.y} width={W} height={H} fill="none" stroke="#000" strokeWidth="1.2" />
      {[0, 500, 1000, 1500, 2000].map((k) => (
        <text key={k} x={px(k)} y={p.y + H + 22} fontSize="17" textAnchor="middle">
          {k}
        </text>
      ))}
      {p.labels.map((v) => (
        <g key={v}>
          <text x={p.x - 17} y={py(v) + 7} fontSize="17" textAnchor="end">
            10
          </text>
          <text x={p.x - 16} y={py(v) - 3} fontSize="12">
            {v}
          </text>
        </g>
      ))}
      <text x={cx - 2} y={p.y + H + 45} fontSize="17" textAnchor="middle">
        k
      </text>
      <text transform={`translate(${p.x - 51} ${p.y + H / 2}) rotate(-90)`} fontSize="17" textAnchor="middle">
        error
      </text>
    </g>
  );
};

const Fig2Plot = () => (
  <svg viewBox="1021 419 769 578" className="block h-full w-full" fontFamily={ARIAL} fill="#262626">
    {logPlots.map((p) => (
      <LogAxes key={p.seed} p={p} />
    ))}
  </svg>
);

/* ---------- figure window ---------- */
const menus: [string, string, string][] = [
  ['F', 'ile', 'w-[48px]'],
  ['E', 'dit', 'w-[53px]'],
  ['V', 'iew', 'w-[60px]'],
  ['I', 'nsert', 'w-[67px]'],
  ['T', 'ools', 'w-[67px]'],
  ['D', 'esktop', 'w-[90px]'],
  ['W', 'indow', 'w-[86px]'],
  ['H', 'elp', 'w-[50px]'],
];

const Tool = ({ className, children }: { className: string; children: ReactNode }) => (
  <span className={`flex h-full items-center justify-center ${className}`}>{children}</span>
);

const Figure = ({
  className,
  n,
  active,
  children,
}: {
  className: string;
  n: number;
  active?: boolean;
  children: ReactNode;
}) => (
  <div className={`absolute flex flex-col overflow-hidden border ${active ? 'border-[#3d8bc4]' : 'border-[#b8b8b8]'} bg-white ${className}`}>
    <div className={`flex h-[42px] shrink-0 items-center pl-[12px] ${active ? 'bg-[#0074d1] text-white' : 'bg-white text-[#999]'}`}>
      <MatlabLogo />
      <span className="ml-[7px] text-[16px] tracking-[0.4px]">Figure {n}</span>
      <div className="ml-auto flex items-center">
        <span className="flex w-[63px] justify-center">
          <WinMin color={active ? 'bg-white' : 'bg-[#999]'} />
        </span>
        <span className="flex w-[63px] justify-center">
          <WinMax color={active ? '#fff' : '#888'} />
        </span>
        <span className="flex w-[63px] justify-center">
          <WinX color={active ? '#fff' : '#888'} />
        </span>
      </div>
    </div>
    <div className="flex h-[37px] shrink-0 items-center border-b border-[#b5b5b5] bg-white pb-[2px] pl-[11px] text-[16px] tracking-[0.7px] text-[#333]">
      {menus.map(([a, b, w]) => (
        <span key={a} className={w}>
          <u>{a}</u>
          {b}
        </span>
      ))}
      <svg width="12" height="10" viewBox="0 0 12 10" className="ml-auto mr-[7px]">
        <path d="M0 1 7 5V1l4 8H4l2-3z" fill="#111" />
      </svg>
    </div>
    <div className="flex h-[37px] shrink-0 items-center border-b border-[#a8a8a8] bg-[#f3f3f3] pb-[3px] pt-px">
      <Tool className="w-[32px]"><TbNew /></Tool>
      <Tool className="w-[32px]"><TbOpen /></Tool>
      <Tool className="w-[32px]"><TbSave /></Tool>
      <Tool className="w-[32px]"><TbPrint /></Tool>
      <TbSep className="w-[8px]" />
      <Tool className="w-[36px]"><TbPointer /></Tool>
      <TbSep className="w-[8px]" />
      <Tool className="w-[32px]"><TbZoom plus /></Tool>
      <Tool className="w-[32px]"><TbZoom /></Tool>
      <Tool className="w-[32px]"><TbHand /></Tool>
      <Tool className="w-[32px]"><TbRotate /></Tool>
      <Tool className="w-[32px]"><TbData /></Tool>
      <Tool className="w-[30px]"><TbBrush /></Tool>
      <Tool className="w-[18px]">
        <svg width="7" height="5" viewBox="0 0 7 5">
          <path d="M0 0h7L3.500 5z" fill="#333" />
        </svg>
      </Tool>
      <TbSep className="w-[8px]" />
      <Tool className="w-[34px]"><TbLink /></Tool>
      <TbSep className="w-[10px]" />
      <Tool className="w-[32px]"><TbColorbar /></Tool>
      <Tool className="w-[32px]">
        <span className={`flex h-[33px] w-[31px] items-center justify-center border ${active ? 'border-transparent' : 'border-[#7db3dc] bg-[#cfe4f6]'}`}>
          <TbLegend />
        </span>
      </Tool>
      <TbSep className="w-[10px]" />
      <Tool className="w-[32px]"><TbGray /></Tool>
      <Tool className="w-[32px]"><TbRect /></Tool>
    </div>
    <div className="min-h-0 flex-1 bg-[#cbcbcb]">{children}</div>
  </div>
);

/* ---------- overlays ---------- */
const ImeBar = () => (
  <div className="absolute left-[1612px] top-[1146px] flex h-[43px] w-[310px] items-center">
    <div className="absolute bottom-[2px] left-[15px] right-0 top-[8px] border border-[#d7dde4] bg-white" />
    <span className="relative flex h-[38px] w-[40px] rotate-[-13deg] items-center justify-center rounded-[5px] bg-gradient-to-br from-[#f58a3c] to-[#e9561a] font-['Liberation_Sans'] text-[36px] font-bold italic leading-none text-white">
      S
    </span>
    <div className="relative ml-[9px] flex flex-1 items-center justify-between pr-[7px] text-[#1273cf]">
      <span className="w-[24px] text-center [font-family:'Noto_Sans_CJK_SC',sans-serif] text-[20px] font-bold leading-none">中</span>
      <span className="w-[22px] text-center text-[18px] font-bold leading-none">°,</span>
      <Mic size={21} strokeWidth={2.6} />
      <FaKeyboard size={22} />
      <FaTshirt size={22} />
      <FaRobot size={22} />
      <svg width="20" height="22" viewBox="0 0 20 22">
        <g fill="#1273cf">
          <rect x="1" y="2" width="8" height="8" rx="3" />
          <rect x="11" y="2" width="8" height="8" rx="3" />
          <rect x="1" y="12" width="8" height="8" rx="3" />
          <rect x="11" y="12" width="8" height="8" rx="3" />
        </g>
      </svg>
      <FaCog size={20} />
    </div>
  </div>
);

const Monitor = () => (
  <div className="absolute left-[1692px] top-[1318px] flex h-[92px] w-[206px] items-center font-['Roboto']">
    <div className="absolute left-[70px] top-[21px] flex h-[56px] w-[133px] items-center rounded-r-[28px] bg-[#f3f3f3] pl-[26px] shadow-[0_1px_4px_rgba(0,0,0,0.15)]">
      <div className="flex w-[64px] flex-col gap-[8px] leading-none">
        <div className="flex items-center justify-between text-[13px] text-[#333]">
          <span className="text-[17px] font-bold leading-[13px] text-[#2b8fd8]">↑</span>
          <span>7.7K/s</span>
        </div>
        <div className="whitespace-nowrap text-[14.500px] tracking-[-0.2px] text-[#777]">
          CPU <span className="text-[#35bd76]">34℃</span>
        </div>
      </div>
      <span className="relative ml-[7px] flex h-[23px] w-[23px] items-center justify-center rounded-full bg-[#2f80e4] text-[18px] font-bold leading-none text-white">
        +
        <span className="absolute -right-[2px] -top-[3px] h-[9px] w-[9px] rounded-full bg-[#e9573f]" />
      </span>
    </div>
    <div className="relative flex h-[91px] w-[86px] items-center justify-center rounded-full border-x-[8px] border-b-[7px] border-t-[14px] border-[#44c06f] bg-[#f6f6f6] text-[#555] shadow-[0_0_3px_rgba(68,192,111,0.7)]">
      <span className="text-[33px] font-light leading-none">18</span>
      <span className="mt-[10px] text-[17px] leading-none">%</span>
    </div>
  </div>
);

const ResizeRing = () => (
  <div className="absolute left-[986px] top-[963px] flex h-[86px] w-[86px] items-center justify-center rounded-full border-[8px] border-[#f0d480]/85 shadow-[0_0_3px_rgba(240,212,128,0.6)]">
    <svg width="24" height="24" viewBox="0 0 30 30">
      <path d="M19 3h8v8l-3-3L8 24l3 3H3v-8l3 3L22 6z" fill="#e8e8e8" stroke="#111" strokeWidth="1.8" strokeLinejoin="round" />
    </svg>
  </div>
);

export default function App() {
  return (
    <div className="relative h-[1440px] w-[1922px] overflow-hidden bg-[#f0f0f0] [font-family:'Noto_Sans','Noto_Sans_CJK_SC',sans-serif]">
      {/* desktop window title */}
      <div className="flex h-[32px] items-center justify-end bg-white pr-[26px]">
        <WinMin color="bg-[#999]" />
        <span className="ml-[48px]">
          <WinRestore color="#999" />
        </span>
        <span className="ml-[46px]">
          <WinX color="#999" />
        </span>
      </div>
      <div className="flex h-[39px] items-center justify-end border-t border-[#8fc0df] bg-[linear-gradient(90deg,#02234a_0%,#02264f_35%,#0c4a90_58%,#0f5099_88%,#0a2f5e_93%)] pb-[2px] pr-[8px]">
        <QaBar live={true} save={false} />
        <div className="ml-[5px] flex h-[33px] w-[263px] items-center justify-between bg-white px-[5px] text-[15px] tracking-[0.95px] text-[#555]">
          <span>Search Documentation</span>
          <Magnifier s={22} />
        </div>
        <span className="ml-[14px]">
          <Collapse />
        </span>
      </div>
      <div className="h-[5px] border-y border-[#bdbdbd] bg-[#e3e3e3]" />

      <div className="flex h-[1212px]">
        {/* editor window */}
        <div className="flex w-[1825px] flex-col border-r border-[#a8a8a8]">
          <div className="flex h-[42px] shrink-0 items-center whitespace-nowrap bg-white text-[16.700px] text-[#999]">
            <span>ditor - C:\Users\Administrator\Desktop\已经交付\1-软件算法开发\0033_基于最小二乘递推算法的系统参数辨识matlab仿真\code\Runme1.m</span>
            <div className="ml-auto flex items-center">
              <WinMin color="bg-[#999]" />
              <span className="ml-[47px]">
                <WinMax color="#999" />
              </span>
              <span className="ml-[47px]">
                <WinX color="#999" />
              </span>
              <span className="w-[22px]" />
            </div>
          </div>
          <div className="flex h-[38px] shrink-0 items-end bg-[linear-gradient(90deg,#02234a_0%,#02264f_25%,#0c4a90_50%,#0f5099_80%,#0a2f5e_92%)]">
            <div className="flex h-[34px] w-[88px] items-center rounded-tr-[5px] bg-gradient-to-b from-[#f4f4f4] to-[#dcdcdc] text-[15px] text-[#333]">DITOR</div>
            <div className="ml-[3px] flex h-[34px] w-[147px] items-center justify-center rounded-t-[5px] bg-[#3f6b9c] text-[15px] text-white">PUBLISH</div>
            <div className="ml-[3px] flex h-[34px] w-[122px] items-center justify-center rounded-t-[5px] bg-[#3f6b9c] text-[15px] text-white">VIEW</div>
            <div className="ml-auto mb-[3px] flex items-center">
              <QaBar live={false} save={true} />
              <span className="ml-[8px] flex w-[20px] justify-center">
                <CircleDown light />
              </span>
              <span className="ml-[12px] mr-[8px]">
                <Collapse />
              </span>
            </div>
          </div>
          <Ribbon />
          <div className="flex h-[33px] shrink-0 items-end border-b border-[#c4c4c4] bg-[#f4f4f4] text-[15.500px] text-[#444]">
            <div className="flex h-full w-[113px] items-center justify-between bg-white pr-[10px]">
              <span>unme1.m</span>
              <WinX color="#b4b4b4" s={13} w={2.4} />
            </div>
            <div className="flex h-full w-[139px] items-center justify-between rounded-b-[4px] border-x border-b border-[#aaa] bg-[#ececec] pl-[13px] pr-[10px]">
              <span>Runme2.m</span>
              <WinX color="#b4b4b4" s={13} w={2.4} />
            </div>
            <div className="flex h-full w-[41px] items-center justify-center rounded-b-[4px] border-r border-b border-[#aaa] bg-[#ececec] text-[24px] font-semibold leading-none">+</div>
          </div>
          <div className="flex min-h-0 flex-1">
            <CodePane />
            <div className="flex w-[21px] flex-col items-center bg-[#f0f0f0] pb-[7px]">
              <div className="h-[5px] w-full bg-[#666]" />
              <div className="mt-[18px] h-[275px] w-full bg-[#c4c4c4]" />
              <div className="mt-auto">
                <Chevron />
              </div>
            </div>
            <Markers />
          </div>
          <div className="flex h-[30px] shrink-0 items-end justify-end bg-[#f0f0f0] pb-[2px]">
            <div className="h-[21px] w-[368px] border-t border-[#888] bg-[#f0f0f0]" />
            <div className="flex h-[21px] w-[169px] items-center border-l border-t border-[#888] text-[15.500px] text-[#333]">
              <span className="ml-[6px] w-[37px]">Ln</span>
              <span className="w-[46px]">1</span>
              <span className="w-[46px]">Col</span>
              <span>1</span>
            </div>
            <div className="flex w-[19px] justify-end">
              <Grip />
            </div>
          </div>
        </div>
        {/* right column */}
        <div className="flex min-w-0 flex-1 flex-col">
          <div className="h-[124px] bg-gradient-to-b from-[#d8d8d8] to-[#a6a6a6]" />
          <div className="flex h-[32px] border-y border-[#c4c4c4] bg-white pr-[4px]">
            <span className="ml-auto mr-[10px] flex items-center">
              <Caret />
            </span>
            <span className="flex w-[30px] items-center justify-center rounded-[3px] bg-[#dfe7ef]">
              <Magnifier s={22} />
            </span>
          </div>
          <div className="flex h-[26px] items-center justify-end bg-gradient-to-b from-[#f7f7f7] to-[#dedede] pr-[10px]">
            <CircleDown />
          </div>
          <div className="flex-1 border-r-4 border-[#8f8f8f] bg-white" />
          <div className="h-[11px] bg-[#f0f0f0]" />
          <div className="flex h-[28px] items-center justify-end bg-gradient-to-b from-[#f7f7f7] to-[#e6e6e6] pr-[10px]">
            <CircleDown />
          </div>
        </div>
      </div>

      {/* bottom panels */}
      <div className="flex h-[123px]">
        <div className="w-[1311px] border-t-2 border-[#999] bg-white" />
        <div className="w-[10px] bg-[#f0f0f0]" />
        <div className="flex flex-1 border-l-2 border-t-2 border-[#777] bg-white">
          <div className="flex-1 pl-[36px] font-['Liberation_Mono'] text-[16px] leading-[30px] text-[#333]">
            {['main', 'main2', 'test'].map((n) => (
              <div key={n} className="flex h-[30px] items-center border-l border-dotted border-[#888]">
                <span className="mr-[2px] w-[14px] border-t border-dotted border-[#888]" />
                {n}
              </div>
            ))}
            <div className="flex h-[30px] items-start">
              <span className="mr-[2px] h-[15px] w-[15px] border-b border-l border-dotted border-[#888]" />
              Runme1
            </div>
          </div>
          <div className="flex w-[21px] flex-col items-center justify-between bg-[#f0f0f0] py-[8px]">
            <Chevron up />
            <div className="mb-[5px] mt-auto h-[11px] w-full bg-[#cfcfcf]" />
            <Chevron />
          </div>
          <div className="w-[4px] bg-[#8f8f8f]" />
        </div>
      </div>
      <div className="flex h-[29px] items-end justify-end border-t border-[#9a9a9a] bg-[#f0f0f0]">
        <Grip />
      </div>

      {/* windows that float on top */}
      <Figure className="left-[209px] top-[320px] h-[696px] w-[772px]" n={1}>
        <Fig1Plot />
      </Figure>
      <Figure className="left-[1020px] top-[302px] h-[696px] w-[771px]" n={2} active>
        <Fig2Plot />
      </Figure>
      <ResizeRing />
      <ImeBar />
      <Monitor />
    </div>
  );
}
